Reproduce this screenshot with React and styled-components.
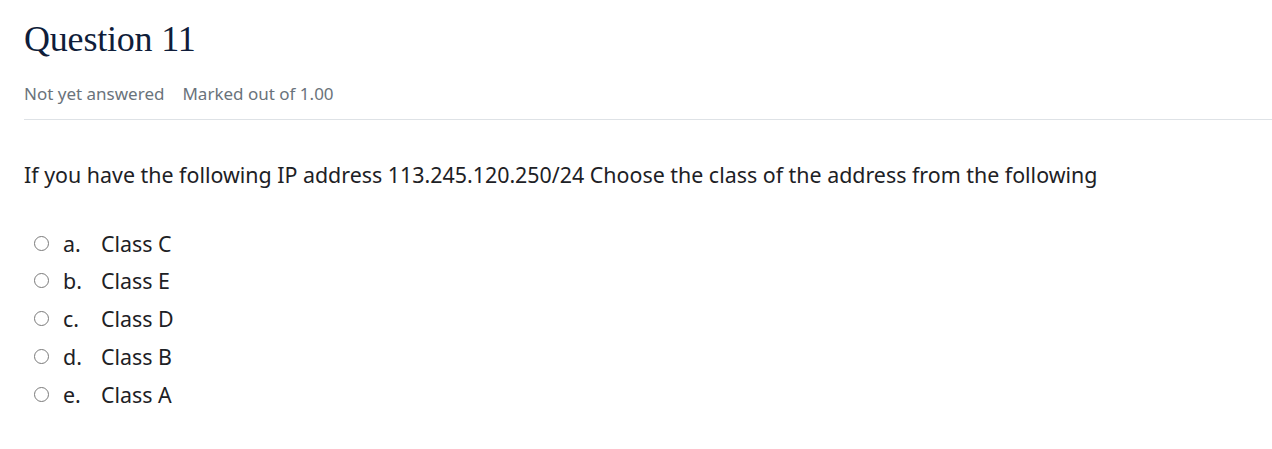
import React from "react";
import styled, { createGlobalStyle } from "styled-components";

const GlobalStyle = createGlobalStyle`
  body {
    margin: 0;
    background: #ffffff;
    font-family: "Noto Sans", "Open Sans", sans-serif;
    color: #1d2125;
  }
`;

const Page = styled.div`
  padding: 0 0 0 24px;
`;

const Header = styled.div`
  border-bottom: 1px solid #dee2e6;
  padding-top: 19px;
  padding-bottom: 12px;
`;

const Title = styled.h3`
  margin: 0;
  font-family: "Liberation Serif", "DejaVu Serif", serif;
  font-weight: 400;
  font-size: 36px;
  line-height: 40px;
  color: #0f1d3a;
  letter-spacing: -0.2px;
`;

const Meta = styled.div`
  display: flex;
  gap: 18px;
  margin-top: 22px;
  font-size: 17px;
  line-height: 26px;
  color: #6a737b;
`;

const Prompt = styled.div`
  margin-top: 39px;
  font-size: 21.4px;
  line-height: 32px;
  color: #1d2125;
`;

const Answers = styled.div`
  margin-top: 36px;
  display: flex;
  flex-direction: column;
  gap: 5.75px;
`;

const Option = styled.label`
  display: flex;
  align-items: center;
  height: 32px;
  font-size: 21.4px;
  color: #1d2125;
`;

const Radio = styled.span`
  box-sizing: border-box;
  width: 15px;
  height: 15px;
  border: 1.5px solid #7a7a7a;
  border-radius: 50%;
  margin-left: 10px;
  margin-right: 14px;
`;

const Letter = styled.span`
  width: 38px;
`;

const answers = [
  ["a.", "Class C"],
  ["b.", "Class E"],
  ["c.", "Class D"],
  ["d.", "Class B"],
  ["e.", "Class A"],
];

export default function App() {
  return (
    <>
      <GlobalStyle />
      <Page>
        <Header>
          <Title>Question 11</Title>
          <Meta>
            <span>Not yet answered</span>
            <span>Marked out of 1.00</span>
          </Meta>
        </Header>
        <Prompt>
          If you have the following IP address 113.245.120.250/24 Choose the
          class of the address from the following
        </Prompt>
        <Answers>
          {answers.map(([letter, text]) => (
            <Option key={letter}>
              <Radio />
              <Letter>{letter}</Letter>
              {text}
            </Option>
          ))}
        </Answers>
      </Page>
    </>
  );
}
